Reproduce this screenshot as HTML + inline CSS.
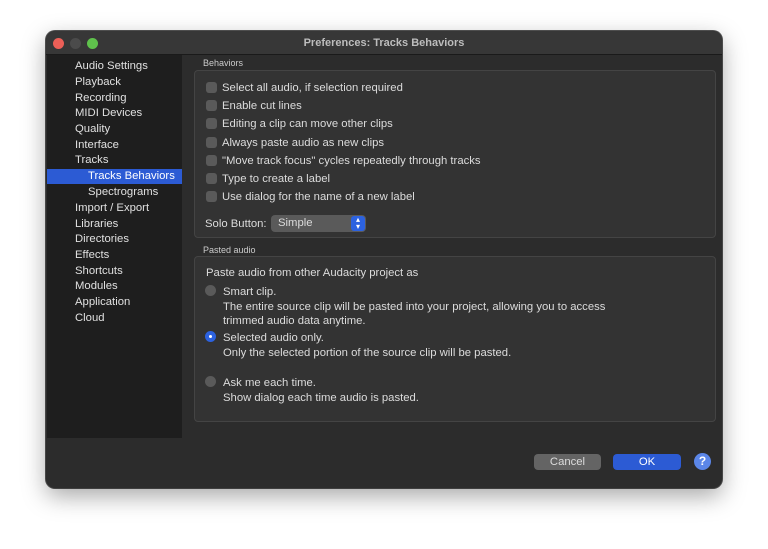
<!DOCTYPE html>
<html><head><style>
*{margin:0;padding:0;box-sizing:border-box}
body{width:768px;height:549px;background:#fff;font-family:"Liberation Sans",sans-serif;font-size:11.3px;color:#dcdcdc;position:relative;overflow:hidden}
.win{position:absolute;left:46px;top:31px;width:676px;height:457px;background:#2c2c2c;border-radius:9px;box-shadow:0 8px 24px rgba(0,0,0,.35),0 0 0 1px #555;overflow:hidden}
.title{position:absolute;left:0;top:0;width:100%;height:24px;background:#373737;border-bottom:1px solid #1a1a1a;text-align:center;line-height:24px;font-weight:bold;color:#bdbdbd;font-size:11px}
.dot{position:absolute;top:7px;width:11px;height:11px;border-radius:50%}
.side{position:absolute;left:1px;top:24px;width:135px;height:383px;background:#1e1e1e}
.si{position:absolute;left:28px;color:#e0e0e0}
.hl{position:absolute;left:0;top:114px;width:135px;height:15px;background:#2c5bd4}
.abs{position:absolute;white-space:nowrap}
.box{position:absolute;left:148px;width:522px;background:#333333;border:1px solid #444;border-radius:4px}
.cb{position:absolute;left:160px;width:11px;height:11px;border-radius:3px;background:#5a5a5a}
.rd{position:absolute;left:159px;width:11px;height:11px;border-radius:50%;background:#5a5a5a}
.lbl{font-size:9px;color:#ccc}
</style></head><body>
<div class="win">
<div class="title">Preferences: Tracks Behaviors</div>
<div class="dot" style="left:7px;background:#ec5f57"></div>
<div class="dot" style="left:24px;background:#4b4b4b"></div>
<div class="dot" style="left:41px;background:#5fc24c"></div>
<div class="side">
<div class="hl"></div>
<div class="si" style="top:5px">Audio Settings</div>
<div class="si" style="top:21px">Playback</div>
<div class="si" style="top:37px">Recording</div>
<div class="si" style="top:52px">MIDI Devices</div>
<div class="si" style="top:68px">Quality</div>
<div class="si" style="top:84px">Interface</div>
<div class="si" style="top:99px">Tracks</div>
<div class="si" style="top:115px;left:41px;color:#fff">Tracks Behaviors</div>
<div class="si" style="top:131px;left:41px">Spectrograms</div>
<div class="si" style="top:147px">Import / Export</div>
<div class="si" style="top:163px">Libraries</div>
<div class="si" style="top:178px">Directories</div>
<div class="si" style="top:194px">Effects</div>
<div class="si" style="top:210px">Shortcuts</div>
<div class="si" style="top:225px">Modules</div>
<div class="si" style="top:241px">Application</div>
<div class="si" style="top:257px">Cloud</div>
</div>
<div class="abs lbl" style="left:157px;top:27px">Behaviors</div>
<div class="box" style="top:39px;height:168px"></div>
<div class="cb" style="top:51px"></div><div class="abs" style="left:176px;top:51px">Select all audio, if selection required</div>
<div class="cb" style="top:69px"></div><div class="abs" style="left:176px;top:69px">Enable cut lines</div>
<div class="cb" style="top:87px"></div><div class="abs" style="left:176px;top:87px">Editing a clip can move other clips</div>
<div class="cb" style="top:106px"></div><div class="abs" style="left:176px;top:106px">Always paste audio as new clips</div>
<div class="cb" style="top:124px"></div><div class="abs" style="left:176px;top:124px">"Move track focus" cycles repeatedly through tracks</div>
<div class="cb" style="top:142px"></div><div class="abs" style="left:176px;top:142px">Type to create a label</div>
<div class="cb" style="top:160px"></div><div class="abs" style="left:176px;top:160px">Use dialog for the name of a new label</div>
<div class="abs" style="left:159px;top:187px">Solo Button:</div>
<div class="abs" style="left:225px;top:184px;width:95px;height:17px;background:#5a5a5a;border-radius:4px;padding:2px 0 0 7px">Simple</div>
<div class="abs" style="left:305px;top:185px;width:14px;height:15px;background:#2c62e0;border-radius:3px;color:#fff;font-size:8px;text-align:center;line-height:7px">▴<br>▾</div>
<div class="abs lbl" style="left:157px;top:214px">Pasted audio</div>
<div class="box" style="top:225px;height:166px"></div>
<div class="abs" style="left:160px;top:236px">Paste audio from other Audacity project as</div>
<div class="rd" style="top:254px"></div>
<div class="abs" style="left:177px;top:254px;line-height:14.5px">Smart clip.<br>The entire source clip will be pasted into your project, allowing you to access<br>trimmed audio data anytime.</div>
<div class="rd" style="top:300px;background:#2c62e0"><div style="position:absolute;left:4px;top:4px;width:3px;height:3px;border-radius:50%;background:#fff"></div></div>
<div class="abs" style="left:177px;top:300px;line-height:14.5px">Selected audio only.<br>Only the selected portion of the source clip will be pasted.</div>
<div class="rd" style="top:345px"></div>
<div class="abs" style="left:177px;top:345px;line-height:14.5px">Ask me each time.<br>Show dialog each time audio is pasted.</div>
<div class="abs" style="left:488px;top:423px;width:67px;height:16px;background:#646464;border-radius:4px;text-align:center;line-height:16px">Cancel</div>
<div class="abs" style="left:567px;top:423px;width:68px;height:16px;background:#2c5bd4;border-radius:4px;text-align:center;line-height:16px;color:#fff">OK</div>
<div class="abs" style="left:648px;top:422px;width:17px;height:17px;border-radius:50%;background:#5b86e8;color:#fff;text-align:center;line-height:17px;font-weight:bold;font-size:12px">?</div>
</div>
</body></html>
